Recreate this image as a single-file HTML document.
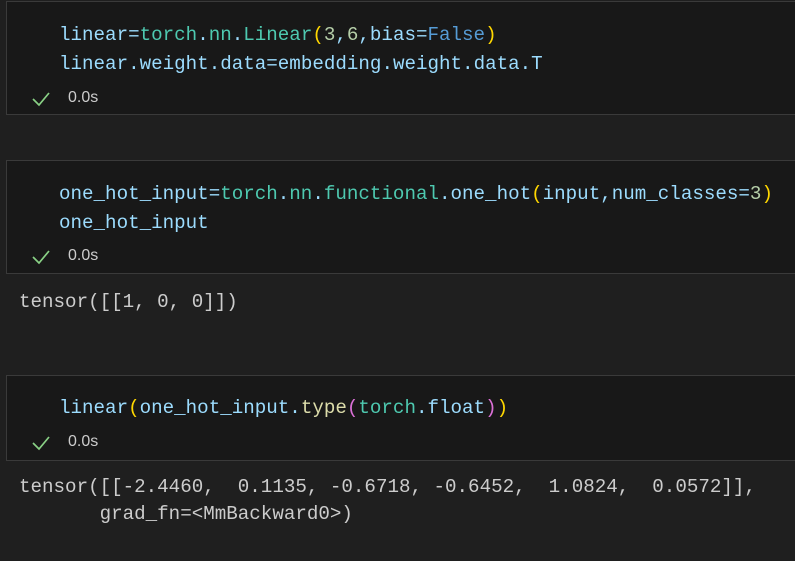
<!DOCTYPE html>
<html><head><style>
body{margin:0;width:795px;height:561px;background:#1f1f1f;overflow:hidden;position:relative;font-family:"Liberation Mono",monospace;}
.cell{position:absolute;left:6px;width:800px;background:#181818;border:1px solid #3a3a3a;box-sizing:border-box;}
.code{position:absolute;left:59px;font-size:19.2px;line-height:29px;white-space:pre;color:#9cdcfe;}
.t{position:absolute;left:68px;font-family:"Liberation Sans",sans-serif;font-size:16px;color:#cccccc;}
.ck{position:absolute;left:31px;}
.out{position:absolute;left:19px;font-size:19.2px;line-height:27px;white-space:pre;color:#cccccc;}
.v{color:#9cdcfe}.c{color:#4ec9b0}.n{color:#b5cea8}.p{color:#ffd700}.m{color:#da70d6}.k{color:#569cd6}.f{color:#dcdcaa}
</style></head><body>
<div class="cell" style="top:1px;height:114px"></div>
<div class="code" style="top:21px"><span class="v">linear</span>=<span class="c">torch</span>.<span class="c">nn</span>.<span class="c">Linear</span><span class="p">(</span><span class="n">3</span>,<span class="n">6</span>,<span class="v">bias</span>=<span class="k">False</span><span class="p">)</span>
<span class="v">linear</span>.<span class="v">weight</span>.<span class="v">data</span>=<span class="v">embedding</span>.<span class="v">weight</span>.<span class="v">data</span>.<span class="v">T</span></div>
<svg class="ck" style="top:90px" width="20" height="18"><path d="M2 9 L8 15 L18 3" stroke="#89d185" stroke-width="1.7" fill="none"/></svg>
<div class="t" style="top:89px">0.0s</div>

<div class="cell" style="top:160px;height:114px"></div>
<div class="code" style="top:180px"><span class="v">one_hot_input</span>=<span class="c">torch</span>.<span class="c">nn</span>.<span class="c">functional</span>.<span class="v">one_hot</span><span class="p">(</span><span class="v">input</span>,<span class="v">num_classes</span>=<span class="n">3</span><span class="p">)</span>
<span class="v">one_hot_input</span></div>
<svg class="ck" style="top:248px" width="20" height="18"><path d="M2 9 L8 15 L18 3" stroke="#89d185" stroke-width="1.7" fill="none"/></svg>
<div class="t" style="top:247px">0.0s</div>
<div class="out" style="top:289px">tensor([[1, 0, 0]])</div>

<div class="cell" style="top:375px;height:86px"></div>
<div class="code" style="top:394px"><span class="v">linear</span><span class="p">(</span><span class="v">one_hot_input</span>.<span class="f">type</span><span class="m">(</span><span class="c">torch</span>.<span class="v">float</span><span class="m">)</span><span class="p">)</span></div>
<svg class="ck" style="top:434px" width="20" height="18"><path d="M2 9 L8 15 L18 3" stroke="#89d185" stroke-width="1.7" fill="none"/></svg>
<div class="t" style="top:433px">0.0s</div>
<div class="out" style="top:474px">tensor([[-2.4460,  0.1135, -0.6718, -0.6452,  1.0824,  0.0572]],
       grad_fn=&lt;MmBackward0&gt;)</div>
</body></html>
